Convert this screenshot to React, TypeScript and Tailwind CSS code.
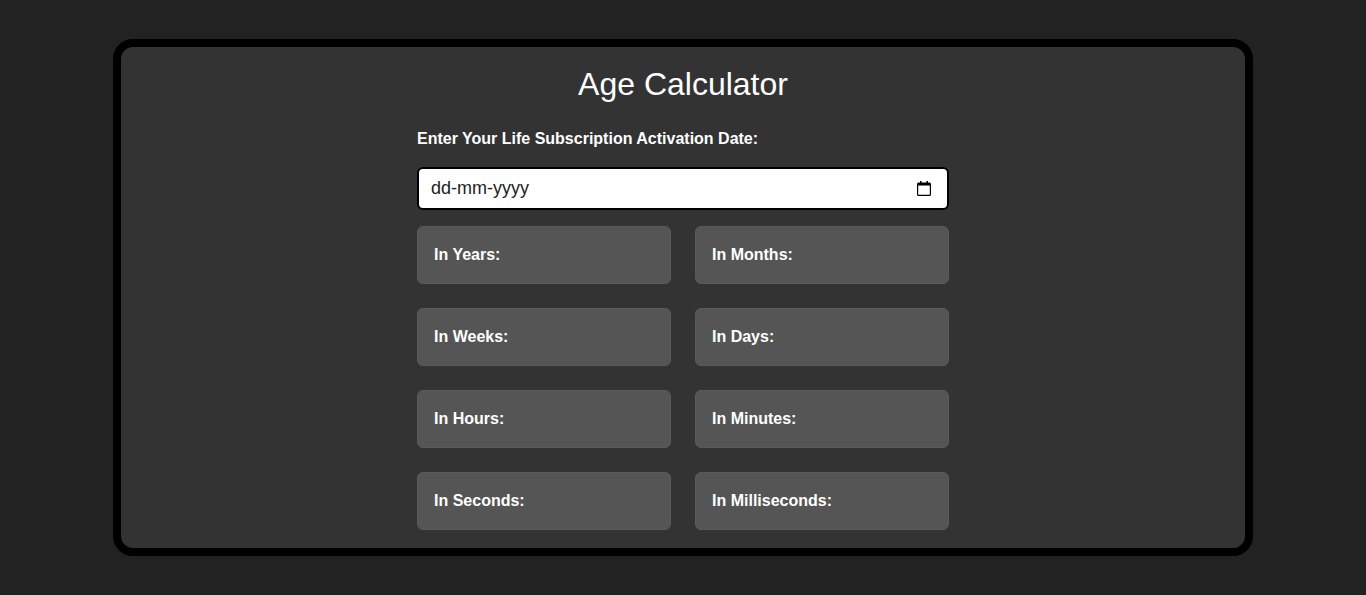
const results = [
  'In Years:',
  'In Months:',
  'In Weeks:',
  'In Days:',
  'In Hours:',
  'In Minutes:',
  'In Seconds:',
  'In Milliseconds:',
];

export default function App() {
  return (
    <div className="flex h-[595px] w-full justify-center overflow-hidden bg-[#222222] pt-[39px] font-['Liberation_Sans',Arial,sans-serif] text-white">
      <div className="flex h-[517px] w-[1140px] flex-col items-center rounded-[20px] border-8 border-black bg-[#333333] pt-[16px]">
        <h1 className="h-[42px] text-[32px] leading-[42px]">Age Calculator</h1>

        <div className="w-[532px] pt-[25px]">
          <label className="block text-[16px] leading-[18px] font-bold">
            Enter Your Life Subscription Activation Date:
          </label>

          {/* date field, drawn by hand so it keeps the dd-mm-yyyy format */}
          <div className="mt-[19px] flex h-[43px] items-center justify-between rounded-[6px] border-2 border-black bg-white pr-[16px] pl-[12px] text-[18px] text-[#222222]">
            <span>dd-mm-yyyy</span>
            <svg width="14" height="15" viewBox="0 0 14 15" className="block">
              <path d="M3 0h1.500v1.500h5V0H11v1.500h1.500A1.500 1.500 0 0 1 14 3v10.500a1.500 1.500 0 0 1-1.500 1.500h-11A1.500 1.500 0 0 1 0 13.500V3a1.500 1.500 0 0 1 1.500-1.500H3V0zM1.200 4.500v9.300h11.600V4.500H1.200z" fill="#000000" />
            </svg>
          </div>

          <div className="mt-[16px] grid grid-cols-2 gap-6">
            {results.map((label) => (
              <div
                key={label}
                className="h-[58px] rounded-[6px] border border-[#5a5a5a] bg-[#555555] px-4 pt-[19px] text-[16px] leading-[18px] font-bold"
              >
                {label}
              </div>
            ))}
          </div>
        </div>
      </div>
    </div>
  );
}
